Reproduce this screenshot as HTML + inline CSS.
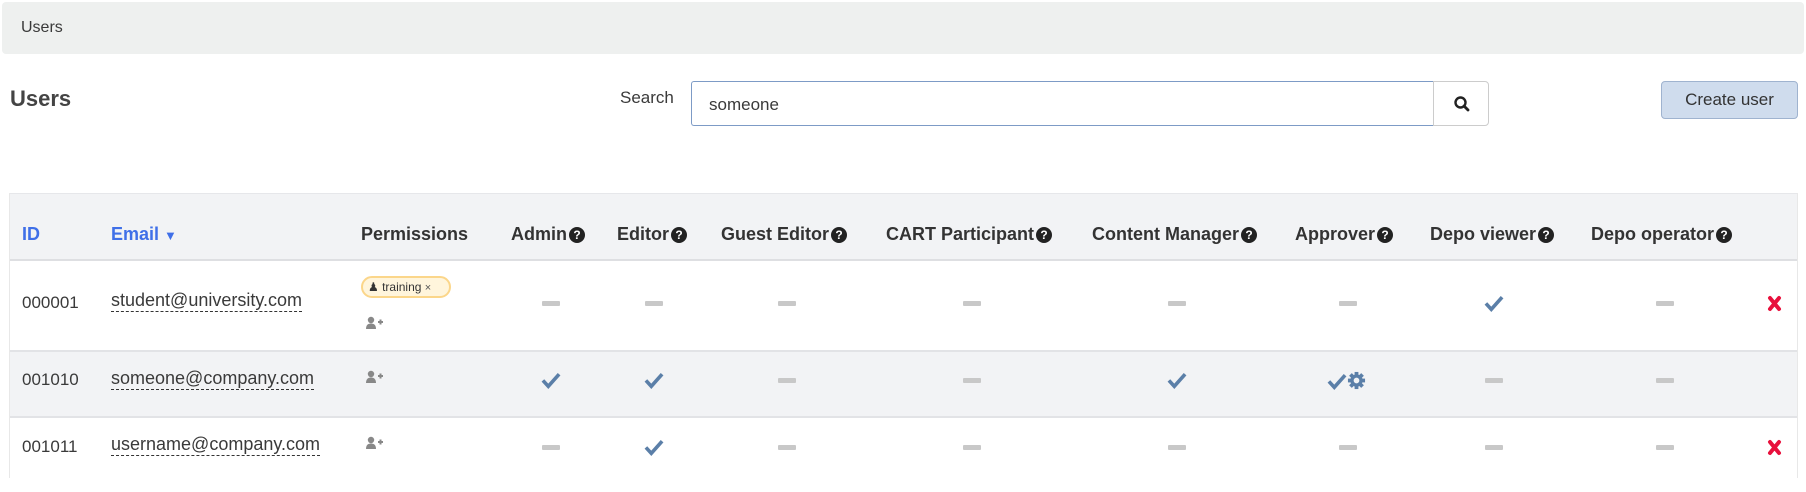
<!DOCTYPE html>
<html><head><meta charset="utf-8">
<style>
*{margin:0;padding:0;box-sizing:border-box}
body{width:1806px;height:492px;background:#fff;font-family:"Liberation Sans",Arial,sans-serif;color:#333;position:relative;overflow:hidden}
.a{position:absolute}
.bc{left:2px;top:2px;width:1802px;height:52px;background:#eef0ef;border-radius:4px}
.h{font-size:18px;font-weight:bold;color:#333;white-space:nowrap}
.t{font-size:17px;white-space:nowrap;color:#3a3a3a}
.em{border-bottom:1px dashed #333;line-height:21px;font-size:18px}
.dash{width:18px;height:5px;background:#c8c8c8;border-radius:1px}
.q{display:inline-block;width:16px;height:16px;border-radius:50%;background:#222;color:#fff;font-size:12px;font-weight:bold;text-align:center;line-height:16px;vertical-align:1px;margin-left:2px}
</style></head><body>
<div class="a bc"></div>
<div class="a t" style="left:21px;top:19px;font-size:16px">Users</div>
<div class="a" style="left:10px;top:86px;font-size:22px;font-weight:bold;color:#444">Users</div>
<div class="a t" style="left:620px;top:88px">Search</div>
<div class="a" style="left:691px;top:81px;width:743px;height:45px;border:1px solid #7d9bc6;border-right:none;border-radius:3px 0 0 3px"></div>
<div class="a t" style="left:709px;top:95px">someone</div>
<div class="a" style="left:1433px;top:81px;width:56px;height:45px;border:1px solid #ccc;border-radius:0 4px 4px 0"></div>
<svg class="a" style="left:1453px;top:95px" width="18" height="18" viewBox="0 0 18 18"><circle cx="7.5" cy="7.5" r="5" fill="none" stroke="#222" stroke-width="2.4"/><line x1="11" y1="11" x2="15" y2="15" stroke="#222" stroke-width="2.8" stroke-linecap="round"/></svg>
<div class="a" style="left:1661px;top:81px;width:137px;height:38px;background:#cfdced;border:1px solid #9fb3cf;border-radius:4px;font-size:17px;text-align:center;line-height:36px;color:#333">Create user</div>

<div class="a" style="left:9px;top:193px;width:1789px;height:68px;background:#f2f3f5;border-top:1px solid #e6e7ea;border-bottom:2px solid #dedfe2"></div>
<div class="a" style="left:9px;top:350px;width:1789px;height:68px;background:#f2f3f5;border-top:2px solid #e2e3e6;border-bottom:2px solid #e2e3e6"></div>
<div class="a" style="left:9px;top:193px;width:1px;height:285px;background:#e8e8e8"></div>
<div class="a" style="left:1797px;top:193px;width:1px;height:285px;background:#e8e8e8"></div>

<div class="a h" style="left:22px;top:224px;color:#3f6fe8">ID</div>
<div class="a h" style="left:111px;top:224px;color:#3f6fe8">Email <span style="font-size:13px">&#9660;</span></div>
<div class="a h" style="left:361px;top:224px">Permissions</div>
<div class="a h" style="left:511px;top:224px">Admin<span class="q">?</span></div>
<div class="a h" style="left:617px;top:224px">Editor<span class="q">?</span></div>
<div class="a h" style="left:721px;top:224px">Guest Editor<span class="q">?</span></div>
<div class="a h" style="left:886px;top:224px">CART Participant<span class="q">?</span></div>
<div class="a h" style="left:1092px;top:224px">Content Manager<span class="q">?</span></div>
<div class="a h" style="left:1295px;top:224px">Approver<span class="q">?</span></div>
<div class="a h" style="left:1430px;top:224px">Depo viewer<span class="q">?</span></div>
<div class="a h" style="left:1591px;top:224px">Depo operator<span class="q">?</span></div>

<div class="a t" style="left:22px;top:293px">000001</div>
<div class="a t em" style="left:111px;top:290px">student@university.com</div>
<div class="a" style="left:361px;top:276px;width:90px;height:22px;border:2px solid #fbd68a;background:#fff5dc;border-radius:11px;font-size:12px;line-height:18px;padding-left:5px;color:#333;white-space:nowrap">&#9823; training <span style="font-size:11px;color:#555">&#215;</span></div>
<svg class="a" style="left:366px;top:316px" width="18" height="14" viewBox="0 0 18 14"><circle cx="5" cy="4" r="3.2" fill="#888"/><path d="M0 13 Q0 7.5 5 7.5 Q10 7.5 10 13Z" fill="#888"/><path d="M12 6h5M14.5 3.5v5" stroke="#888" stroke-width="2"/></svg>

<div class="a t" style="left:22px;top:370px">001010</div>
<div class="a t em" style="left:111px;top:368px">someone@company.com</div>
<svg class="a" style="left:366px;top:370px" width="18" height="14" viewBox="0 0 18 14"><circle cx="5" cy="4" r="3.2" fill="#888"/><path d="M0 13 Q0 7.5 5 7.5 Q10 7.5 10 13Z" fill="#888"/><path d="M12 6h5M14.5 3.5v5" stroke="#888" stroke-width="2"/></svg>

<div class="a t" style="left:22px;top:437px">001011</div>
<div class="a t em" style="left:111px;top:434px">username@company.com</div>
<svg class="a" style="left:366px;top:436px" width="18" height="14" viewBox="0 0 18 14"><circle cx="5" cy="4" r="3.2" fill="#888"/><path d="M0 13 Q0 7.5 5 7.5 Q10 7.5 10 13Z" fill="#888"/><path d="M12 6h5M14.5 3.5v5" stroke="#888" stroke-width="2"/></svg>

<div id="cells"></div>
<script>
var cols=[551,654,787,972,1177,1348,1494,1665];
var rows=[[0,0,0,0,0,0,1,0],[1,1,0,0,1,2,0,0],[0,1,0,0,0,0,0,0]];
var ys=[303,380,447];
var h='';
var chk='<svg width="20" height="18" viewBox="0 0 22 20"><path d="M2 10.5 L8 17 L20 3.5" fill="none" stroke="#5b7fa8" stroke-width="4"/></svg>';
var gear='<svg width="19" height="19" viewBox="0 0 20 20"><g fill="#5b7fa8"><circle cx="10" cy="10" r="6.5"/><rect x="8" y="1" width="4" height="18"/><rect x="1" y="8" width="18" height="4"/><rect x="8" y="1" width="4" height="18" transform="rotate(45 10 10)"/><rect x="8" y="1" width="4" height="18" transform="rotate(-45 10 10)"/></g><circle cx="10" cy="10" r="3" fill="#f2f3f5"/></svg>';
rows.forEach(function(r,i){r.forEach(function(v,j){
 var x=cols[j],y=ys[i];
 if(v==0)h+='<div class="a dash" style="left:'+(x-9)+'px;top:'+(y-2)+'px"></div>';
 else if(v==1)h+='<div class="a" style="left:'+(x-10)+'px;top:'+(y-9)+'px">'+chk+'</div>';
 else h+='<div class="a" style="left:'+(x-21)+'px;top:'+(y-9)+'px">'+chk+gear+'</div>';
});});
[303,447].forEach(function(y){h+='<svg class="a" style="left:1767px;top:'+(y-8)+'px" width="15" height="17" viewBox="0 0 15 17"><path d="M3 3L12 14M12 3L3 14" stroke="#e8103c" stroke-width="4" stroke-linecap="round"/></svg>';});
document.getElementById('cells').innerHTML=h;
</script>
</body></html>
